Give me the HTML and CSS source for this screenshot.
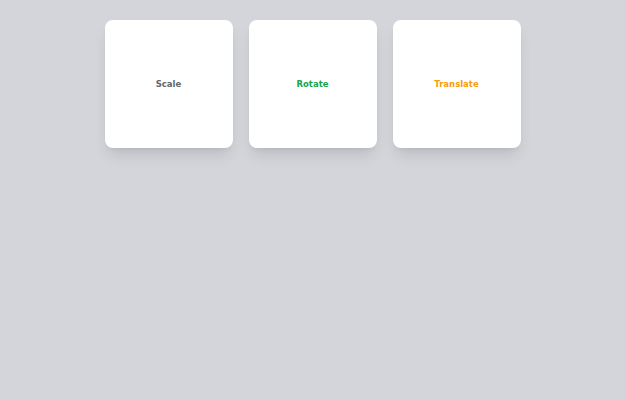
FILE: index.html
```html
<!DOCTYPE html>
<html>
<head>
<meta charset="utf-8">
<link rel="stylesheet" href="styles.css">
</head>
<body>
<div class="row">
  <div class="card"><span class="label scale">Scale</span></div>
  <div class="card"><span class="label rotate">Rotate</span></div>
  <div class="card"><span class="label translate">Translate</span></div>
</div>
</body>
</html>
```
FILE: styles.css
```css
html, body {
  margin: 0;
  padding: 0;
  background: #d4d5da;
  height: 100%;
}
body {
  font-family: "DejaVu Sans", sans-serif;
}
.row {
  display: flex;
  justify-content: center;
  gap: 16px;
  padding-top: 20px;
}
.card {
  width: 128px;
  height: 128px;
  background: #ffffff;
  border-radius: 8px;
  box-shadow: 0 10px 15px -3px rgba(0,0,0,0.1), 0 4px 6px -4px rgba(0,0,0,0.1);
  display: flex;
  align-items: center;
  justify-content: center;
}
.label {
  font-size: 8.5px;
  font-weight: 700;
}
.scale { color: #666666; }
.rotate { color: #16a34a; }
.translate { color: #f59e0b; }
```
